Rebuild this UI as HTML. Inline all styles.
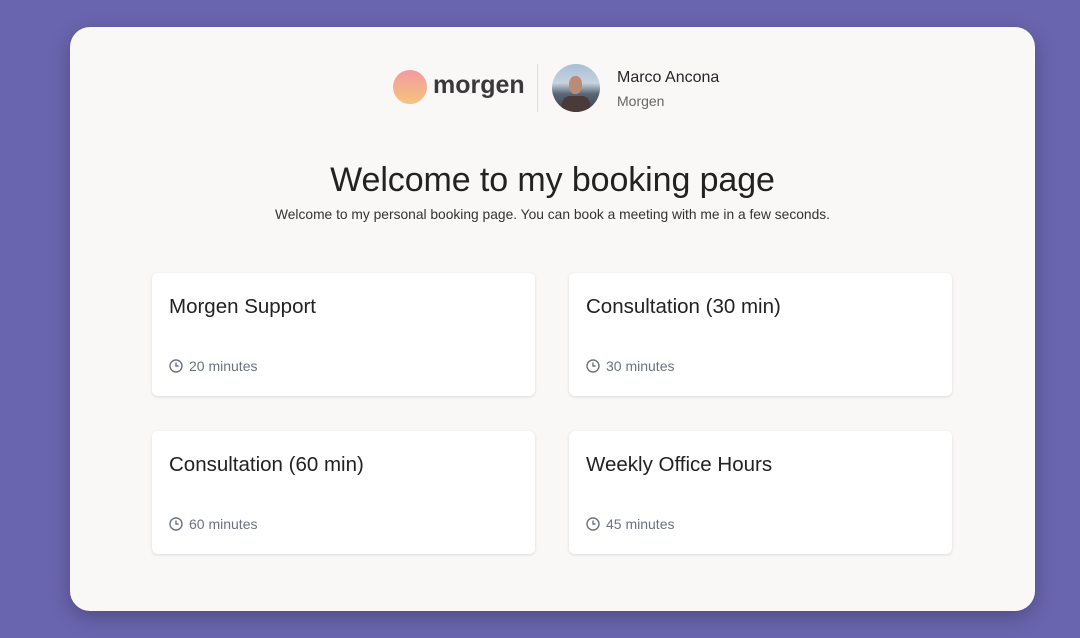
<!DOCTYPE html>
<html><head><meta charset="utf-8"><style>
body{margin:0;width:1080px;height:638px;background:#6a65af;font-family:"Liberation Sans",sans-serif;overflow:hidden;position:relative}
.panel{position:absolute;left:70px;top:27px;width:965px;height:584px;background:#f9f8f7;border-radius:20px;box-shadow:0 6px 20px rgba(0,0,0,.25)}
.logo{position:absolute;left:393px;top:70px;width:34px;height:34px;border-radius:50%;background:linear-gradient(180deg,#f29aa4,#f6c47a)}
.brand{position:absolute;left:433px;top:71px;font-size:25px;font-weight:bold;color:#3a3a3c;letter-spacing:0}
.div{position:absolute;left:537px;top:64px;width:1px;height:48px;background:#d8dde5}
.av{position:absolute;left:552px;top:64px;width:48px;height:48px;border-radius:50%;background:linear-gradient(180deg,#a9bfd6 0,#c6d3df 40%,#5a6777 62%,#3a3e45 100%);overflow:hidden}
.av:after{content:"";position:absolute;left:17px;top:12px;width:13px;height:18px;border-radius:45%;background:#b98c78}
.av:before{content:"";position:absolute;left:10px;top:32px;width:28px;height:20px;border-radius:8px 8px 0 0;background:#4b3a3a}
.name{position:absolute;left:617px;top:69px;font-size:16px;color:#26262a}
.org{position:absolute;left:617px;top:93px;font-size:14px;color:#666}
h1{position:absolute;left:70px;width:965px;top:161px;margin:0;text-align:center;font-size:34px;font-weight:normal;color:#222;letter-spacing:-.1px}
.sub{position:absolute;left:70px;width:965px;top:207px;text-align:center;font-size:13.8px;color:#333}
.card{position:absolute;width:383px;height:123px;background:#fff;border-radius:6px;box-shadow:0 1px 3px rgba(0,0,0,.12)}
.card .t{position:absolute;left:17px;top:22px;font-size:20.5px;color:#222}
.card .d{position:absolute;left:17px;top:85px;font-size:14px;color:#6b7280;display:flex;align-items:center;gap:6px}
</style></head><body>
<div class="panel"></div>
<div class="logo"></div><div class="brand">morgen</div>
<div class="div"></div><div class="av"></div>
<div class="name">Marco Ancona</div><div class="org">Morgen</div>
<h1>Welcome to my booking page</h1>
<div class="sub">Welcome to my personal booking page. You can book a meeting with me in a few seconds.</div>
<div class="card" style="left:152px;top:273px"><div class="t">Morgen Support</div><div class="d"><svg width="14" height="14" viewBox="0 0 14 14" fill="none" stroke="#6b7280" stroke-width="1.4"><circle cx="7" cy="7" r="6"/><path d="M7 3.5V7h2.6"/></svg>20 minutes</div></div>
<div class="card" style="left:569px;top:273px"><div class="t">Consultation (30 min)</div><div class="d"><svg width="14" height="14" viewBox="0 0 14 14" fill="none" stroke="#6b7280" stroke-width="1.4"><circle cx="7" cy="7" r="6"/><path d="M7 3.5V7h2.6"/></svg>30 minutes</div></div>
<div class="card" style="left:152px;top:431px"><div class="t">Consultation (60 min)</div><div class="d"><svg width="14" height="14" viewBox="0 0 14 14" fill="none" stroke="#6b7280" stroke-width="1.4"><circle cx="7" cy="7" r="6"/><path d="M7 3.5V7h2.6"/></svg>60 minutes</div></div>
<div class="card" style="left:569px;top:431px"><div class="t">Weekly Office Hours</div><div class="d"><svg width="14" height="14" viewBox="0 0 14 14" fill="none" stroke="#6b7280" stroke-width="1.4"><circle cx="7" cy="7" r="6"/><path d="M7 3.5V7h2.6"/></svg>45 minutes</div></div>
</body></html>
